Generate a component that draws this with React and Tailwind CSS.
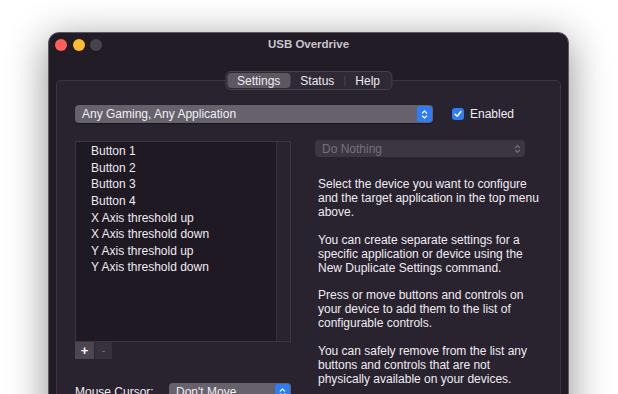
import React from 'react';

const font = { fontFamily: '"Liberation Sans", Arial, sans-serif' };

const items = [
  'Button 1',
  'Button 2',
  'Button 3',
  'Button 4',
  'X Axis threshold up',
  'X Axis threshold down',
  'Y Axis threshold up',
  'Y Axis threshold down',
];

const paragraphs = [
  'Select the device you want to configure and the target application in the top menu above.',
  'You can create separate settings for a specific application or device using the New Duplicate Settings command.',
  'Press or move buttons and controls on your device to add them to the list of configurable controls.',
  'You can safely remove from the list any buttons and controls that are not physically available on your devices.',
];

function Chevrons({ className }) {
  return (
    <svg viewBox="0 0 8 12" className={className} fill="none" stroke="currentColor" strokeWidth="1.4" strokeLinecap="round" strokeLinejoin="round">
      <path d="M1.5 4.5 L4 2 L6.5 4.5" />
      <path d="M1.5 7.5 L4 10 L6.5 7.5" />
    </svg>
  );
}

export default function App() {
  return (
    <div className="w-[618px] h-[394px] overflow-hidden bg-white pt-[32px] pl-[48px]" style={font}>
      <div className="w-[521px] h-[420px] rounded-t-[11px] bg-[#221c27] border border-[#5d5862] shadow-[0_8px_40px_rgba(0,0,0,0.45)] flex flex-col">
        {/* Title bar */}
        <div className="h-[24px] grid grid-cols-[1fr_auto_1fr] items-center">
          <div className="flex items-center gap-[5.5px] pl-[6px]">
            <span className="w-[12px] h-[12px] rounded-full bg-[#fe5f57]" />
            <span className="w-[12px] h-[12px] rounded-full bg-[#febc2e]" />
            <span className="w-[12px] h-[12px] rounded-full bg-[#47434c]" />
          </div>
          <div className="text-[11.5px] font-bold text-[#c9c5cd]">USB Overdrive</div>
          <div />
        </div>

        {/* Group box */}
        <div className="relative mt-[23px] mx-[7px] h-[340px] rounded-[5px] border border-[#3b3641] bg-[#29232f]">
          <div className="absolute -top-[10px] left-1/2 -translate-x-1/2 flex h-[19px] items-center rounded-[5px] border border-[#45404b] bg-[#2f2935] p-[1px] text-[12px] text-[#eeebf0]">
            <div className="h-full px-[10px] flex items-center rounded-[4px] bg-[#5c5761]">Settings</div>
            <div className="h-full px-[10px] flex items-center">Status</div>
            <div className="w-px h-[10px] bg-[#4a4550]" />
            <div className="h-full px-[10px] flex items-center">Help</div>
          </div>

          <div className="pl-[18px] pt-[24px]">
            {/* Top row */}
            <div className="flex items-center">
              <div className="w-[358px] h-[18px] rounded-[4px] bg-[#67616c] flex items-center justify-between pl-[7px] pr-[1px] text-[12px] text-[#f1eff3] shadow-[0_0.5px_1px_rgba(0,0,0,0.4)]">
                <span>Any Gaming, Any Application</span>
                <span className="w-[15px] h-[16px] rounded-[3px] bg-[#2f7cf6] flex items-center justify-center text-white">
                  <Chevrons className="w-[7px] h-[11px]" />
                </span>
              </div>
              <span className="ml-[19px] w-[12px] h-[12px] rounded-[3px] bg-[#2f7cf6] flex items-center justify-center">
                <svg viewBox="0 0 12 12" className="w-[10px] h-[10px]" fill="none" stroke="white" strokeWidth="1.8" strokeLinecap="round" strokeLinejoin="round">
                  <path d="M2.5 6.2 L5 8.7 L9.5 3" />
                </svg>
              </span>
              <span className="ml-[6px] text-[12px] text-[#f1eff3]">Enabled</span>
            </div>

            {/* Main area */}
            <div className="flex mt-[18px]">
              <div className="w-[216px]">
                <div className="h-[201px] border border-[#3b3641] bg-[#1e1923] flex">
                  <div className="flex-1 pt-[1px] pl-[15px] text-[12px] text-[#efecf1]">
                    {items.map((it) => (
                      <div key={it} className="h-[16.6px] flex items-center">{it}</div>
                    ))}
                  </div>
                  <div className="w-[14px] bg-[#28232d] border-l border-[#35303a]" />
                </div>
                <div className="flex h-[17px]">
                  <div className="w-[19px] bg-[#4b4651] flex items-center justify-center text-[13px] font-bold text-white">+</div>
                  <div className="w-px bg-[#2a2530]" />
                  <div className="w-[17px] bg-[#36313c] flex items-center justify-center text-[11px] text-[#77727c]">-</div>
                </div>
                <div className="flex items-center mt-[24px]">
                  <span className="text-[12px] text-[#efecf1] w-[94px]">Mouse Cursor:</span>
                  <div className="w-[122px] h-[18px] rounded-[4px] bg-[#67616c] flex items-center justify-between pl-[7px] pr-[1px] text-[12px] text-[#f1eff3]">
                    <span>Don't Move</span>
                    <span className="w-[15px] h-[16px] rounded-[3px] bg-[#2f7cf6] flex items-center justify-center text-white">
                      <Chevrons className="w-[7px] h-[11px]" />
                    </span>
                  </div>
                </div>
              </div>

              <div className="ml-[24px] -mt-[1px] w-[228px]">
                <div className="w-[210px] h-[17px] rounded-[4px] bg-[#3b3640] flex items-center justify-between pl-[7px] pr-[4px] text-[12px] text-[#76717b]">
                  <span>Do Nothing</span>
                  <Chevrons className="w-[7px] h-[10px] text-[#76717b]" />
                </div>
                <div className="mt-[20px] pl-[3px] text-[12px] leading-[14px] text-[#efecf1] flex flex-col gap-[13.5px]">
                  {paragraphs.map((p) => (
                    <p key={p}>{p}</p>
                  ))}
                </div>
              </div>
            </div>
          </div>
        </div>
      </div>
    </div>
  );
}
